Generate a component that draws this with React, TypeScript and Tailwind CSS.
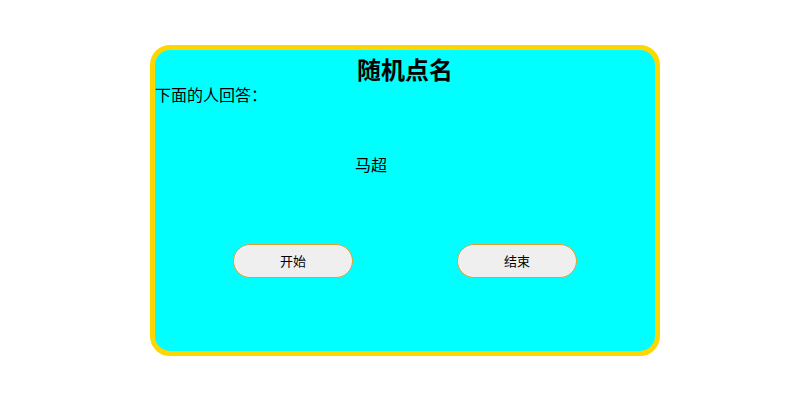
export default function App() {
  return (
    <div className="pt-[45px] pl-[150px]">
      <div
        className="w-[510px] h-[311px] rounded-[20px] border-[5px] border-[#ffd700] bg-[#00ffff] text-black"
        style={{ fontFamily: '"Microsoft YaHei", "Noto Sans CJK SC", sans-serif' }}
      >
        <h1 className="text-center text-[24px] font-bold leading-[36px] mt-[1px]">随机点名</h1>
        <p className="text-[16px] leading-[20px] -mt-[3px]">下面的人回答：</p>
        <div className="pl-[200px] mt-[50px] text-[16px] leading-[20px]">马超</div>
        <div className="flex justify-center gap-[104px] mt-[70px]">
          <button className="w-[120px] h-[34px] rounded-full border border-[#e0a030] bg-[#efefef] text-[13px]">
            开始
          </button>
          <button className="w-[120px] h-[34px] rounded-full border border-[#e0a030] bg-[#efefef] text-[13px]">
            结束
          </button>
        </div>
      </div>
    </div>
  );
}
